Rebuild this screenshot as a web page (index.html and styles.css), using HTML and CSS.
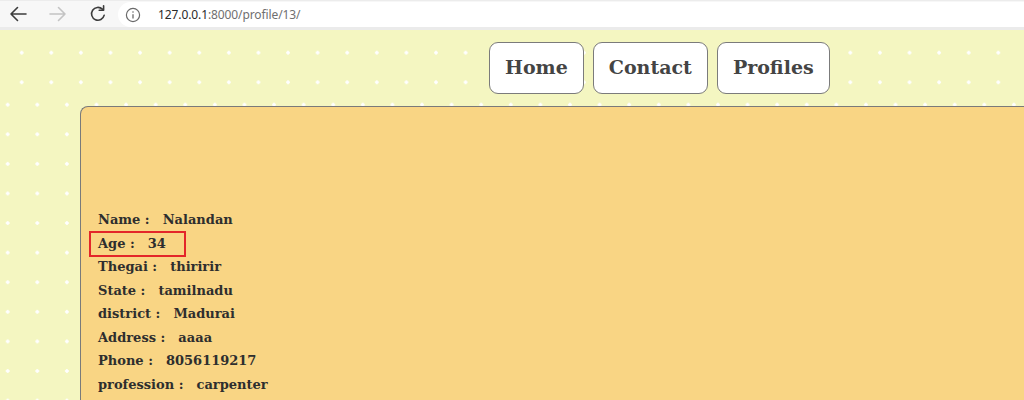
FILE: index.html
```html
<!DOCTYPE html>
<html lang="en">
<head>
<meta charset="utf-8">
<title>Profile</title>
<link rel="stylesheet" href="styles.css">
</head>
<body>
<div class="chrome">
  <div class="nav-icons">
    <svg class="ic ic-back" viewBox="0 0 24 24" width="24" height="24"><path d="M20 12H5M11.5 5.5L5 12l6.5 6.5" fill="none" stroke="#3c3c3c" stroke-width="1.6" stroke-linecap="round" stroke-linejoin="round"/></svg>
    <svg class="ic ic-fwd" viewBox="0 0 24 24" width="24" height="24"><path d="M4 12h15M12.5 5.5L19 12l-6.5 6.5" fill="none" stroke="#c4c4c4" stroke-width="1.6" stroke-linecap="round" stroke-linejoin="round"/></svg>
    <svg class="ic ic-reload" viewBox="0 0 24 24" width="24" height="24"><path d="M18.2 13.2A6.4 6.4 0 1 1 16.4 7.2" fill="none" stroke="#3c3c3c" stroke-width="1.6" stroke-linecap="round"/><path d="M17.6 3.8v4.4h-4.4" fill="none" stroke="#3c3c3c" stroke-width="1.6" stroke-linecap="round" stroke-linejoin="round"/></svg>
  </div>
  <div class="omnibox">
    <svg class="info" viewBox="0 0 16 16" width="16" height="16"><circle cx="8" cy="8" r="6.6" fill="none" stroke="#6a6a6a" stroke-width="1.2"/><path d="M8 7.2v4.2" stroke="#6a6a6a" stroke-width="1.3"/><circle cx="8" cy="5" r="0.8" fill="#6a6a6a"/></svg>
    <span class="url"><span class="host">127.0.0.1</span>:8000/profile/13/</span>
  </div>
</div>
<div class="page">
  <header class="topbar">
    <nav class="menu">
      <a class="menu-btn" href="#">Home</a>
      <a class="menu-btn" href="#">Contact</a>
      <a class="menu-btn" href="#">Profiles</a>
    </nav>
  </header>
  <main class="card">
    <div class="details">
      <div class="row"><span class="label">Name :</span><span class="value">Nalandan</span></div>
      <div class="row"><span class="label">Age :</span><span class="value">34</span></div>
      <div class="row"><span class="label">Thegai :</span><span class="value">thiririr</span></div>
      <div class="row"><span class="label">State :</span><span class="value">tamilnadu</span></div>
      <div class="row"><span class="label">district :</span><span class="value">Madurai</span></div>
      <div class="row"><span class="label">Address :</span><span class="value">aaaa</span></div>
      <div class="row"><span class="label">Phone :</span><span class="value">8056119217</span></div>
      <div class="row"><span class="label">profession :</span><span class="value">carpenter</span></div>
    </div>
  </main>
  <div class="highlight"></div>
</div>
</body>
</html>
```
FILE: styles.css
```css
html, body {
  margin: 0;
  padding: 0;
  overflow: hidden;
  height: 400px;
}
body {
  background: #f4f6c1;
}
.chrome {
  height: 30px;
  box-sizing: border-box;
  background: #f7f7f7;
  border-top: 1px solid #ececec;
  border-bottom: 3px solid #ebebeb;
  display: flex;
  align-items: flex-start;
}
.nav-icons {
  display: flex;
  align-items: center;
  gap: 16px;
  padding-left: 6px;
  height: 26px;
  width: 112px;
}
.ic {
  display: block;
}
.omnibox {
  flex: 1;
  margin-top: 1px;
  height: 25px;
  background: #fff;
  border-radius: 13px 0 0 13px;
  display: flex;
  align-items: center;
  padding-left: 7px;
}
.info {
  display: block;
  margin-right: 17px;
}
.url {
  font-family: "Noto Sans", "Open Sans", sans-serif;
  font-size: 12px;
  color: #6f6f6f;
  letter-spacing: -0.1px;
}
.host {
  color: #2a2a2a;
}
.page {
  position: relative;
  height: 370px;
  overflow: hidden;
  background-color: #f4f6c1;
  background-image: radial-gradient(circle at center, #ffffff 1.5px, transparent 2px);
  background-size: 29.6px 29.6px;
  background-position: 22.5px 0.7px;
}
.topbar {
  height: 70px;
  box-sizing: border-box;
  background-color: #f4f6c1;
  background-image: radial-gradient(circle at center, #ffffff 1.5px, transparent 2px);
  background-size: 29.6px 29.6px;
  background-position: 6.9px 7.9px;
  padding-top: 12px;
}
.menu {
  display: flex;
  gap: 9px;
  padding-left: 489px;
}
.menu-btn {
  display: block;
  height: 52px;
  box-sizing: border-box;
  padding: 0 15px;
  line-height: 48px;
  background: #ffffff;
  border: 1px solid #7b7b7b;
  border-radius: 9px;
  font-family: "DejaVu Serif", "Liberation Serif", serif;
  font-weight: bold;
  font-size: 19px;
  color: #444444;
  text-decoration: none;
}
.card {
  margin: 6px 0 0 80px;
  height: 294px;
  box-sizing: border-box;
  background: #f9d584;
  border: 1px solid #7a7a7a;
  border-right: none;
  border-bottom: none;
  border-radius: 8px 0 0 0;
  padding: 101px 0 0 17px;
}
.details {
  font-family: "DejaVu Serif", "Liberation Serif", serif;
  font-weight: bold;
  font-size: 13px;
  color: #2e2e2e;
}
.row {
  height: 23.57px;
  line-height: 23.57px;
  white-space: nowrap;
}
.value {
  margin-left: 13px;
}
.highlight {
  position: absolute;
  left: 89px;
  top: 200.5px;
  width: 97px;
  height: 26px;
  box-sizing: border-box;
  border: 2px solid #e3262a;
}
```
